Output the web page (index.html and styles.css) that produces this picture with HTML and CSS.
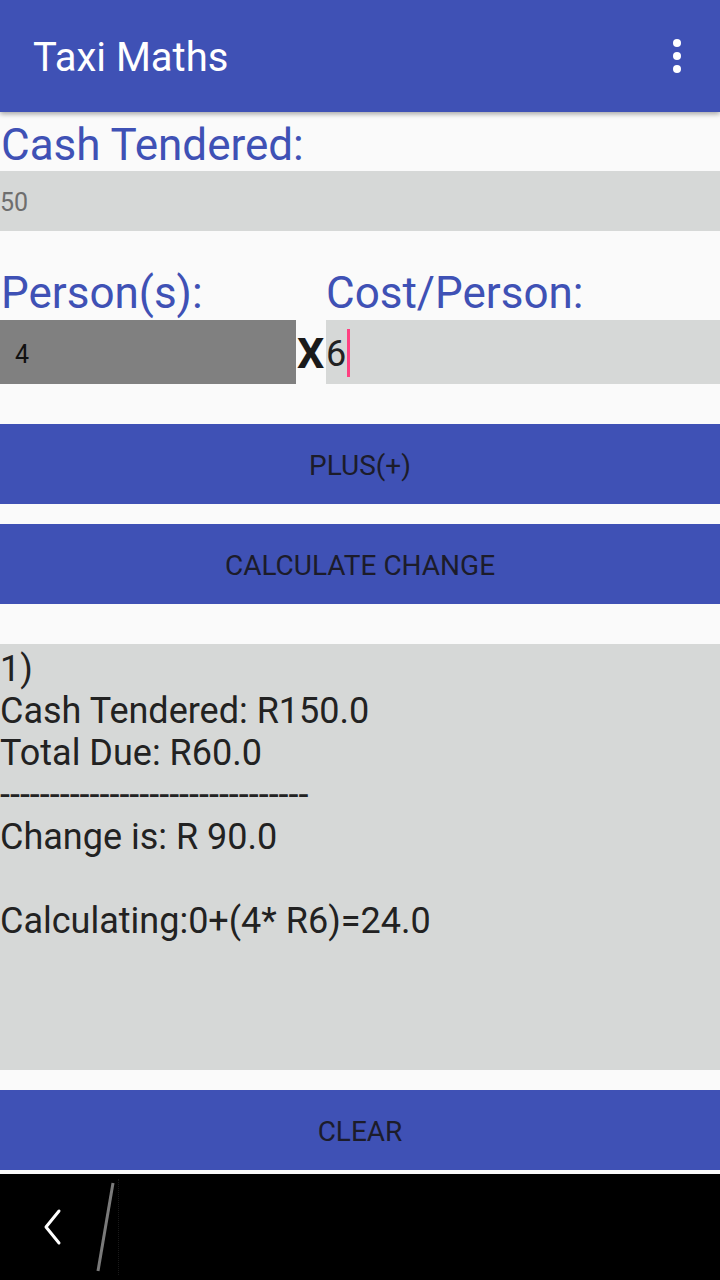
FILE: index.html
```html
<!DOCTYPE html>
<html lang="en">
<head>
  <meta charset="UTF-8">
  <title>Taxi Maths</title>
  <meta name="viewport" content="width=device-width, initial-scale=1">
  <link rel="stylesheet" href="styles.css">
</head>
<body>

  <div class="app-bar">
    <div class="app-title">Taxi Maths</div>
    <div class="overflow">
      <span></span><span></span><span></span>
    </div>
  </div>

  <div class="content">
    <div class="label cash-label">Cash Tendered:</div>
    <div class="field cash-field">50</div>

    <!-- persons x cost -->
    <div class="multiply">
      <div class="label persons-label">Person(s):</div>
      <div class="label cost-label">Cost/Person:</div>
      <div class="field persons-field">4</div>
      <div class="times">X</div>
      <div class="field cost-field">6<span class="caret"></span></div>
    </div>

    <button class="btn plus-btn">PLUS(+)</button>
    <button class="btn calc-btn">CALCULATE CHANGE</button>

    <div class="results">1)
Cash Tendered: R150.0
Total Due: R60.0
-------------------------------
Change is: R 90.0

Calculating:0+(4* R6)=24.0</div>

    <button class="btn clear-btn">CLEAR</button>
  </div>

  <!-- system nav -->
  <div class="nav-bar">
    <svg class="nav-back" width="24" height="40" viewBox="0 0 24 40">
      <path d="M18 4 L5 20 L18 36" fill="none" stroke="#fff" stroke-width="3" stroke-linecap="round" stroke-linejoin="round"/>
    </svg>
    <svg class="nav-slash" width="24" height="96" viewBox="0 0 24 96">
      <line x1="19" y1="4" x2="4" y2="92" stroke="#7a7a7a" stroke-width="3"/>
    </svg>
  </div>

</body>
</html>
```

FILE: styles.css
```css
body {
  margin: 0;
  width: 720px;
  height: 1280px;
  background: #fafafa;
  font-family: Roboto, "Noto Sans", sans-serif;
  display: flex;
  flex-direction: column;
  overflow: hidden;
}
.app-bar {
  height: 112px;
  flex-shrink: 0;
  background: #3f51b5;
  display: flex;
  align-items: center;
  padding: 2px 0 0 33px;
  box-sizing: border-box;
  box-shadow: 0 2px 5px rgba(0,0,0,0.35);
  position: relative;
  z-index: 1;
}
.app-title {
  flex: 1;
  color: #fff;
  font-size: 40px;
}
.overflow {
  width: 86px;
  display: flex;
  flex-direction: column;
  align-items: center;
  gap: 5px;
  margin-top: -2px;
}
.overflow span {
  width: 8px;
  height: 8px;
  border-radius: 50%;
  background: #fff;
}

.content {
  flex: 1;
  display: flex;
  flex-direction: column;
}
.label {
  color: #3f51b5;
  font-size: 44px;
  line-height: 49px;
  padding-left: 1px;
}
.cash-label {
  margin-top: 9px;
  margin-bottom: 1px;
}
.field {
  background: #d6d8d7;
  display: flex;
  align-items: center;
  box-sizing: border-box;
}
.cash-field {
  height: 60px;
  font-size: 25px;
  color: #6e6e6e;
  padding-top: 3px;
}

/* persons x cost */
.multiply {
  display: grid;
  grid-template-columns: 296px 30px 1fr;
  grid-template-rows: 49px 64px;
  row-gap: 2px;
  margin-top: 38px;
}
.persons-label {
  grid-column: 1 / 3;
}
.cost-label {
  padding-left: 0;
}
.persons-field {
  background: #808080;
  font-size: 25px;
  color: #111;
  padding: 4px 0 0 15px;
}
.times {
  font-size: 43px;
  font-weight: bold;
  color: #1a1a1a;
  display: flex;
  align-items: center;
  padding: 2px 0 0 1px;
}
.cost-field {
  font-size: 36px;
  color: #222;
  padding: 3px 0 0 0;
}
.caret {
  width: 3px;
  height: 48px;
  background: #ff4081;
  margin-left: 1px;
  margin-top: -2px;
}

.btn {
  display: block;
  width: 100%;
  height: 80px;
  border: none;
  background: #3f51b5;
  color: #1c1c2a;
  font-family: Roboto, "Noto Sans", sans-serif;
  font-size: 28px;
  padding: 2px 0 0;
  cursor: pointer;
}
.plus-btn {
  margin-top: 40px;
}
.calc-btn {
  margin-top: 20px;
}
.results {
  margin-top: 40px;
  height: 426px;
  box-sizing: border-box;
  background: #d6d8d7;
  white-space: pre;
  font-size: 36px;
  line-height: 42px;
  color: #222;
  padding-top: 4px;
}
.clear-btn {
  margin-top: 20px;
}

.nav-bar {
  height: 106px;
  flex-shrink: 0;
  background: #000;
  display: flex;
  align-items: center;
  position: relative;
}
.nav-back {
  margin-left: 41px;
  margin-top: 0;
}
.nav-slash {
  margin-left: 29px;
  margin-top: 0;
  border-right: 1px dotted #1a1a1a;
  padding-right: 0;
}
```
